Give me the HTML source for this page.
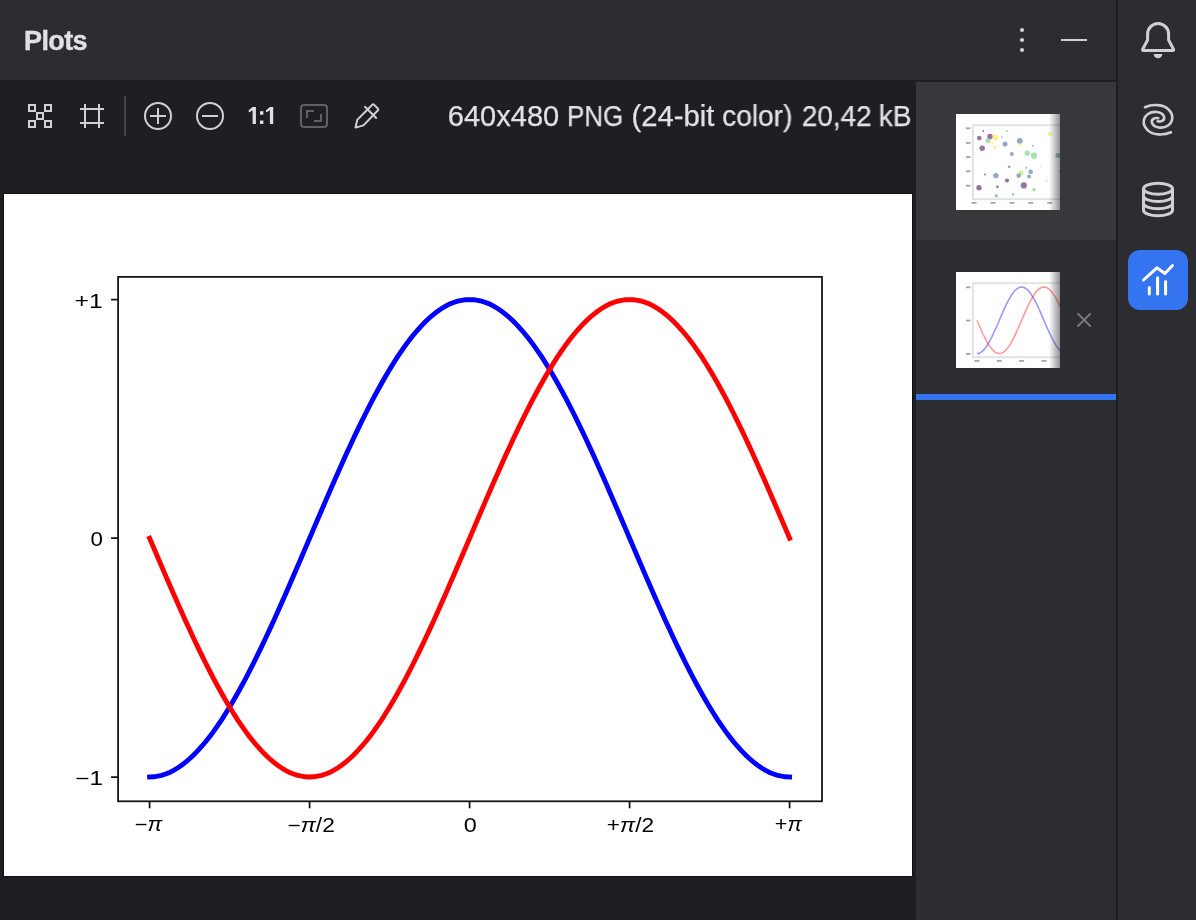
<!DOCTYPE html>
<html><head><meta charset="utf-8">
<style>
*{margin:0;padding:0;box-sizing:border-box}
html,body{width:1196px;height:920px;overflow:hidden;background:#1e1f22;font-family:"Liberation Sans",sans-serif}
.abs{position:absolute}
#header{left:0;top:0;width:1116px;height:80px;background:#2b2d30}
#title{left:24px;top:25px;font-size:27px;font-weight:bold;color:#dfe1e5;line-height:32px;letter-spacing:-0.6px;-webkit-text-stroke:0.4px #dfe1e5}
body div{will-change:transform}
#vsep{left:1116px;top:0;width:2px;height:920px;background:#1e1f22}
#rbar{left:1118px;top:0;width:78px;height:920px;background:#2b2d30}
#panel{left:916px;top:82px;width:200px;height:838px;background:#2b2d30}
#sel{left:916px;top:82px;width:200px;height:158px;background:#36383c}
#blueline{left:916px;top:394px;width:200px;height:6px;background:#3574f0}
.info{top:100px;font-size:28.8px;word-spacing:-2px;-webkit-text-stroke:0.25px #dfe1e5;color:#dfe1e5;line-height:32px;white-space:nowrap}
#plot{left:3px;top:193px;width:910px;height:684px;background:#111216}
#plotinner{left:1px;top:1px;width:908px;height:682px;background:#fff}
.thumb{width:104px;height:96px;background:#fff;overflow:hidden}
.fade{right:0;top:0;width:11.5px;height:96px;background:linear-gradient(to right,rgba(43,45,52,0),rgba(43,45,52,0.56))}
.tick{font-size:19.5px;color:#000;line-height:20px;white-space:nowrap}
</style></head><body>
<div id="header" class="abs"></div>
<div id="title" class="abs">Plots</div>
<div id="vsep" class="abs"></div>
<div id="rbar" class="abs"></div>
<div id="panel" class="abs"></div>
<div id="sel" class="abs"></div>
<div id="blueline" class="abs"></div>

<!-- header icons -->
<svg class="abs" style="left:1000px;top:20px" width="100" height="40" viewBox="0 0 100 40">
  <circle cx="22" cy="10" r="2.1" fill="#ced0d6"/>
  <circle cx="22" cy="20" r="2.1" fill="#ced0d6"/>
  <circle cx="22" cy="30" r="2.1" fill="#ced0d6"/>
  <rect x="61" y="19" width="26" height="2" fill="#ced0d6"/>
</svg>

<!-- toolbar icons -->
<svg class="abs" style="left:0;top:80px" width="400" height="114" viewBox="0 80 400 114">
  <g fill="none" stroke="#ced0d6" stroke-width="2">
    <rect x="29" y="105" width="6" height="6"/>
    <rect x="45" y="105" width="6" height="6"/>
    <rect x="37" y="113" width="6" height="6"/>
    <rect x="29" y="121" width="6" height="6"/>
    <rect x="45" y="121" width="6" height="6"/>
    <path d="M85 104V128M99 104V128M80 109H104M80 123H104"/>
    <circle cx="158" cy="116" r="13"/>
    <path d="M150 116H166M158 108V124"/>
    <circle cx="210" cy="116" r="13"/>
    <path d="M202 116H218"/>
  </g>
  <rect x="124" y="96" width="2" height="40" fill="#43454a"/>
  <g fill="none" stroke="#606060" stroke-width="2">
    <rect x="301" y="105" width="26" height="22" rx="3"/>
    <path d="M307 118V111H314M314 121H321V114"/>
  </g>
  <g fill="none" stroke="#ced0d6" stroke-width="2" stroke-linejoin="round" stroke-linecap="round">
    <path d="M367.6 109.5 L372.2 104.9 Q373.2 103.9 374.2 104.9 L377.8 108.5 Q378.8 109.5 377.8 110.5 L373.4 115 L363.5 125.4 L355.5 127.6 L357.4 119.6 Z"/>
    <path d="M365 106.8 L376.2 118"/>
  </g>
</svg>
<svg class="abs" style="left:240px;top:100px" width="40" height="30" viewBox="240 100 40 30">
  <g fill="#dfe1e5">
    <path d="M248.7 110.2 L252.6 107 H255.9 V124 H252.6 V110.2 L249.4 112.3 Q248.7 112.6 248.7 111.6 Z"/>
    <rect x="260" y="111.2" width="3.4" height="3.5"/>
    <rect x="260" y="120.5" width="3.4" height="3.4"/>
    <path d="M266 110.2 L269.9 107 H273.2 V124 H269.9 V110.2 L266.7 112.3 Q266 112.6 266 111.6 Z"/>
  </g>
</svg>
<div class="abs info" style="left:448.80px;transform-origin:1.20px 50%;transform:translateX(-1.20px) scaleX(1.008)">640x480</div><div class="abs info" style="left:568.80px;transform-origin:2.20px 50%;transform:translateX(-2.20px) scaleX(0.900)">PNG</div><div class="abs info" style="left:632.50px;transform-origin:1.50px 50%;transform:translateX(-1.50px) scaleX(1.016)">(24-bit</div><div class="abs info" style="left:723.10px;transform-origin:0.90px 50%;transform:translateX(-0.90px) scaleX(0.976)">color)</div><div class="abs info" style="left:802.80px;transform-origin:1.20px 50%;transform:translateX(-1.20px) scaleX(0.969)">20,42</div><div class="abs info" style="left:880.70px;transform-origin:2.30px 50%;transform:translateX(-2.30px) scaleX(0.970)">kB</div>

<!-- main plot -->
<div id="plot" class="abs"><div id="plotinner" class="abs">
<svg class="abs" style="left:0;top:0" width="908" height="682" viewBox="0 0 908 682">
  <path d="M145.6 583.0 L149.6 582.8 L153.6 582.2 L157.6 581.3 L161.6 580.0 L165.6 578.4 L169.6 576.4 L173.6 574.0 L177.6 571.3 L181.6 568.2 L185.6 564.8 L189.6 561.0 L193.6 556.9 L197.6 552.5 L201.6 547.8 L205.6 542.7 L209.6 537.4 L213.6 531.7 L217.6 525.8 L221.6 519.5 L225.6 513.0 L229.6 506.3 L233.6 499.3 L237.6 492.0 L241.6 484.6 L245.6 476.9 L249.6 469.0 L253.6 460.9 L257.6 452.6 L261.6 444.2 L265.6 435.6 L269.6 426.9 L273.6 418.0 L277.6 409.0 L281.6 400.0 L285.6 390.8 L289.6 381.6 L293.6 372.3 L297.6 363.0 L301.6 353.6 L305.6 344.2 L309.6 334.9 L313.6 325.5 L317.6 316.2 L321.6 306.9 L325.6 297.7 L329.6 288.5 L333.6 279.5 L337.6 270.5 L341.6 261.6 L345.6 252.9 L349.6 244.3 L353.6 235.9 L357.6 227.6 L361.6 219.5 L365.6 211.6 L369.6 203.9 L373.6 196.5 L377.6 189.2 L381.6 182.2 L385.6 175.5 L389.6 169.0 L393.6 162.7 L397.6 156.8 L401.6 151.1 L405.6 145.8 L409.6 140.7 L413.6 136.0 L417.6 131.6 L421.6 127.5 L425.6 123.7 L429.6 120.3 L433.6 117.2 L437.6 114.5 L441.6 112.1 L445.6 110.1 L449.6 108.5 L453.6 107.2 L457.6 106.3 L461.6 105.7 L465.6 105.6 L469.6 105.7 L473.6 106.3 L477.6 107.2 L481.6 108.5 L485.6 110.1 L489.6 112.1 L493.6 114.5 L497.6 117.2 L501.6 120.3 L505.6 123.7 L509.6 127.5 L513.6 131.6 L517.6 136.0 L521.6 140.7 L525.6 145.8 L529.6 151.1 L533.6 156.8 L537.6 162.7 L541.6 169.0 L545.6 175.5 L549.6 182.2 L553.6 189.2 L557.6 196.5 L561.6 203.9 L565.6 211.6 L569.6 219.5 L573.6 227.6 L577.6 235.9 L581.6 244.3 L585.6 252.9 L589.6 261.6 L593.6 270.5 L597.6 279.5 L601.6 288.5 L605.6 297.7 L609.6 306.9 L613.6 316.2 L617.6 325.5 L621.6 334.9 L625.6 344.2 L629.6 353.6 L633.6 363.0 L637.6 372.3 L641.6 381.6 L645.6 390.8 L649.6 400.0 L653.6 409.0 L657.6 418.0 L661.6 426.9 L665.6 435.6 L669.6 444.2 L673.6 452.6 L677.6 460.9 L681.6 469.0 L685.6 476.9 L689.6 484.6 L693.6 492.0 L697.6 499.3 L701.6 506.3 L705.6 513.0 L709.6 519.5 L713.6 525.8 L717.6 531.7 L721.6 537.4 L725.6 542.7 L729.6 547.8 L733.6 552.5 L737.6 556.9 L741.6 561.0 L745.6 564.8 L749.6 568.2 L753.6 571.3 L757.6 574.0 L761.6 576.4 L765.6 578.4 L769.6 580.0 L773.6 581.3 L777.6 582.2 L781.6 582.8 L785.6 583.0" fill="none" stroke="#0000ff" stroke-width="4.9" stroke-linecap="square"/>
  <path d="M145.6 344.2 L149.6 353.6 L153.6 363.0 L157.6 372.3 L161.6 381.6 L165.6 390.8 L169.6 400.0 L173.6 409.0 L177.6 418.0 L181.6 426.9 L185.6 435.6 L189.6 444.2 L193.6 452.6 L197.6 460.9 L201.6 469.0 L205.6 476.9 L209.6 484.6 L213.6 492.0 L217.6 499.3 L221.6 506.3 L225.6 513.0 L229.6 519.5 L233.6 525.8 L237.6 531.7 L241.6 537.4 L245.6 542.7 L249.6 547.8 L253.6 552.5 L257.6 556.9 L261.6 561.0 L265.6 564.8 L269.6 568.2 L273.6 571.3 L277.6 574.0 L281.6 576.4 L285.6 578.4 L289.6 580.0 L293.6 581.3 L297.6 582.2 L301.6 582.8 L305.6 583.0 L309.6 582.8 L313.6 582.2 L317.6 581.3 L321.6 580.0 L325.6 578.4 L329.6 576.4 L333.6 574.0 L337.6 571.3 L341.6 568.2 L345.6 564.8 L349.6 561.0 L353.6 556.9 L357.6 552.5 L361.6 547.8 L365.6 542.7 L369.6 537.4 L373.6 531.7 L377.6 525.8 L381.6 519.5 L385.6 513.0 L389.6 506.3 L393.6 499.3 L397.6 492.0 L401.6 484.6 L405.6 476.9 L409.6 469.0 L413.6 460.9 L417.6 452.6 L421.6 444.2 L425.6 435.6 L429.6 426.9 L433.6 418.0 L437.6 409.0 L441.6 400.0 L445.6 390.8 L449.6 381.6 L453.6 372.3 L457.6 363.0 L461.6 353.6 L465.6 344.2 L469.6 334.9 L473.6 325.5 L477.6 316.2 L481.6 306.9 L485.6 297.7 L489.6 288.5 L493.6 279.5 L497.6 270.5 L501.6 261.6 L505.6 252.9 L509.6 244.3 L513.6 235.9 L517.6 227.6 L521.6 219.5 L525.6 211.6 L529.6 203.9 L533.6 196.5 L537.6 189.2 L541.6 182.2 L545.6 175.5 L549.6 169.0 L553.6 162.7 L557.6 156.8 L561.6 151.1 L565.6 145.8 L569.6 140.7 L573.6 136.0 L577.6 131.6 L581.6 127.5 L585.6 123.7 L589.6 120.3 L593.6 117.2 L597.6 114.5 L601.6 112.1 L605.6 110.1 L609.6 108.5 L613.6 107.2 L617.6 106.3 L621.6 105.7 L625.6 105.6 L629.6 105.7 L633.6 106.3 L637.6 107.2 L641.6 108.5 L645.6 110.1 L649.6 112.1 L653.6 114.5 L657.6 117.2 L661.6 120.3 L665.6 123.7 L669.6 127.5 L673.6 131.6 L677.6 136.0 L681.6 140.7 L685.6 145.8 L689.6 151.1 L693.6 156.8 L697.6 162.7 L701.6 169.0 L705.6 175.5 L709.6 182.2 L713.6 189.2 L717.6 196.5 L721.6 203.9 L725.6 211.6 L729.6 219.5 L733.6 227.6 L737.6 235.9 L741.6 244.3 L745.6 252.9 L749.6 261.6 L753.6 270.5 L757.6 279.5 L761.6 288.5 L765.6 297.7 L769.6 306.9 L773.6 316.2 L777.6 325.5 L781.6 334.9 L785.6 344.2" fill="none" stroke="#ff0000" stroke-width="4.9" stroke-linecap="square"/>
  <rect x="114.1" y="82.9" width="703.9" height="524.4" fill="none" stroke="#111" stroke-width="1.75"/>
  <g stroke="#111" stroke-width="1.75">
    <path d="M107.1 105.6H114.1M107.1 344.2H114.1M107.1 583.0H114.1"/>
    <path d="M145.6 607.3V614.3M305.6 607.3V614.3M465.6 607.3V614.3M625.6 607.3V614.3M785.6 607.3V614.3"/>
  </g>
</svg>
</div></div>
<div class="abs tick" style="left:0.00px;top:290.55px;width:103px;text-align:right;transform-origin:82.00px 50%;transform:translateX(-5.90px) scaleX(1.270)">+1</div>
<div class="abs tick" style="left:0.00px;top:529.25px;width:103px;text-align:right;transform-origin:93.00px 50%;transform:translateX(-1.40px) scaleX(1.144)">0</div>
<div class="abs tick" style="left:0.00px;top:767.95px;width:103px;text-align:right;transform-origin:82.00px 50%;transform:translateX(-5.20px) scaleX(1.250)">&#8722;1</div>
<div class="abs tick" style="left:49.60px;top:813.50px;width:200px;text-align:center;transform-origin:89.40px 50%;transform:translateX(-2.90px) scaleX(1.126)">&#8722;<i>&#960;</i></div>
<div class="abs tick" style="left:209.60px;top:815.00px;width:200px;text-align:center;transform-origin:81.40px 50%;transform:translateX(-1.90px) scaleX(1.161)">&#8722;<i>&#960;</i>/2</div>
<div class="abs tick" style="left:369.60px;top:815.00px;width:200px;text-align:center;transform-origin:95.40px 50%;transform:translateX(-0.70px) scaleX(1.200)">0</div>
<div class="abs tick" style="left:529.60px;top:815.00px;width:200px;text-align:center;transform-origin:81.40px 50%;transform:translateX(-2.50px) scaleX(1.161)">+<i>&#960;</i>/2</div>
<div class="abs tick" style="left:689.60px;top:813.50px;width:200px;text-align:center;transform-origin:89.40px 50%;transform:translateX(-2.80px) scaleX(1.109)">+<i>&#960;</i></div>

<div class="abs thumb" style="left:956px;top:114px">
<svg width="104" height="96" viewBox="0 0 104 96">
  <rect x="17" y="11.2" width="99" height="74" fill="none" stroke="#e2e2e2" stroke-width="1.9"/>
  <rect x="10" y="13.4" width="4.5" height="1.8" fill="#8a8a8a" fill-opacity="0.75"/><rect x="10" y="28.1" width="4.5" height="1.8" fill="#8a8a8a" fill-opacity="0.75"/><rect x="10" y="42.2" width="4.5" height="1.8" fill="#8a8a8a" fill-opacity="0.75"/><rect x="10" y="56.3" width="4.5" height="1.8" fill="#8a8a8a" fill-opacity="0.75"/><rect x="10" y="70.8" width="4.5" height="1.8" fill="#8a8a8a" fill-opacity="0.75"/><rect x="15.5" y="88" width="5" height="1.8" fill="#8a8a8a" fill-opacity="0.75"/><rect x="34.5" y="88" width="5" height="1.8" fill="#8a8a8a" fill-opacity="0.75"/><rect x="53.5" y="88" width="5" height="1.8" fill="#8a8a8a" fill-opacity="0.75"/><rect x="72.2" y="88" width="5" height="1.8" fill="#8a8a8a" fill-opacity="0.75"/><rect x="91.4" y="88" width="5" height="1.8" fill="#8a8a8a" fill-opacity="0.75"/>
  <circle cx="23.3" cy="24.1" r="2.3" fill="#440154" fill-opacity="0.55"/><circle cx="34" cy="22.5" r="2.7" fill="#440154" fill-opacity="0.55"/><circle cx="39.3" cy="23.5" r="2.9" fill="#fde725" fill-opacity="0.55"/><circle cx="32" cy="26.8" r="2.5" fill="#5ec962" fill-opacity="0.55"/><circle cx="27.2" cy="17" r="1" fill="#440154" fill-opacity="0.55"/><circle cx="51" cy="17" r="1" fill="#5ec962" fill-opacity="0.55"/><circle cx="26.2" cy="34.2" r="2.7" fill="#440154" fill-opacity="0.55"/><circle cx="38.9" cy="33.3" r="1.6" fill="#fde725" fill-opacity="0.55"/><circle cx="49" cy="30" r="2.5" fill="#31688e" fill-opacity="0.55"/><circle cx="63.8" cy="26.8" r="2.9" fill="#31688e" fill-opacity="0.55"/><circle cx="55.9" cy="40" r="2" fill="#31688e" fill-opacity="0.55"/><circle cx="71.2" cy="39.1" r="2.7" fill="#5ec962" fill-opacity="0.55"/><circle cx="78" cy="41.7" r="3.1" fill="#5ec962" fill-opacity="0.55"/><circle cx="77" cy="31.9" r="1" fill="#21918c" fill-opacity="0.55"/><circle cx="93.7" cy="20" r="2.1" fill="#fde725" fill-opacity="0.55"/><circle cx="102" cy="41.5" r="2.5" fill="#21918c" fill-opacity="0.55"/><circle cx="53.2" cy="52.8" r="1.4" fill="#31688e" fill-opacity="0.55"/><circle cx="65.3" cy="58.7" r="2.3" fill="#b5de2b" fill-opacity="0.55"/><circle cx="70.2" cy="53.8" r="1.2" fill="#5ec962" fill-opacity="0.55"/><circle cx="74.7" cy="57.7" r="2.3" fill="#31688e" fill-opacity="0.55"/><circle cx="73.1" cy="62.6" r="2" fill="#31688e" fill-opacity="0.55"/><circle cx="62.7" cy="61.6" r="2.3" fill="#31688e" fill-opacity="0.55"/><circle cx="39.9" cy="61.6" r="2.7" fill="#31688e" fill-opacity="0.55"/><circle cx="51" cy="66.5" r="2.1" fill="#440154" fill-opacity="0.55"/><circle cx="67.8" cy="71.4" r="3.1" fill="#440154" fill-opacity="0.55"/><circle cx="23" cy="73.7" r="2.7" fill="#440154" fill-opacity="0.55"/><circle cx="41.4" cy="72.8" r="1.4" fill="#440154" fill-opacity="0.55"/><circle cx="28.9" cy="60.6" r="1" fill="#440154" fill-opacity="0.55"/><circle cx="78" cy="75.7" r="1.8" fill="#5ec962" fill-opacity="0.55"/><circle cx="40.3" cy="81.8" r="1.6" fill="#21918c" fill-opacity="0.55"/><circle cx="57" cy="80.4" r="1.2" fill="#21918c" fill-opacity="0.55"/><circle cx="90.7" cy="66.9" r="0.7" fill="#21918c" fill-opacity="0.55"/><circle cx="103" cy="57.3" r="0.8" fill="#21918c" fill-opacity="0.55"/><circle cx="45.8" cy="22.9" r="1" fill="#8f8fd0" fill-opacity="0.55"/><circle cx="84.9" cy="52.8" r="0.8" fill="#bbbbbb" fill-opacity="0.55"/><circle cx="81" cy="81" r="0.6" fill="#cccccc" fill-opacity="0.55"/><circle cx="64" cy="30" r="1.5" fill="#fde725" fill-opacity="0.55"/><circle cx="24.3" cy="38.1" r="1" fill="#fde725" fill-opacity="0.55"/><circle cx="36" cy="29" r="1.2" fill="#fde725" fill-opacity="0.55"/>
</svg><div class="abs fade"></div></div>
<div class="abs thumb" style="left:956px;top:272px">
<svg width="104" height="96" viewBox="0 0 104 96">
  <rect x="17" y="11.2" width="99" height="74" fill="none" stroke="#e2e2e2" stroke-width="1.9"/>
  <rect x="10" y="14.4" width="4.5" height="1.8" fill="#8a8a8a" fill-opacity="0.75"/><rect x="10" y="47.7" width="4.5" height="1.8" fill="#8a8a8a" fill-opacity="0.75"/><rect x="10" y="81.0" width="4.5" height="1.8" fill="#8a8a8a" fill-opacity="0.75"/><rect x="18.5" y="88" width="5" height="1.8" fill="#8a8a8a" fill-opacity="0.75"/><rect x="40.8" y="88" width="5" height="1.8" fill="#8a8a8a" fill-opacity="0.75"/><rect x="63.1" y="88" width="5" height="1.8" fill="#8a8a8a" fill-opacity="0.75"/><rect x="85.4" y="88" width="5" height="1.8" fill="#8a8a8a" fill-opacity="0.75"/>
  <path d="M21.0 81.6 L22.5 81.4 L24.0 80.8 L25.5 79.9 L27.0 78.6 L28.6 76.9 L30.1 75.0 L31.6 72.7 L33.1 70.2 L34.6 67.4 L36.1 64.4 L37.6 61.2 L39.1 57.9 L40.7 54.5 L42.2 51.0 L43.7 47.4 L45.2 43.9 L46.7 40.4 L48.2 37.0 L49.7 33.8 L51.2 30.7 L52.7 27.8 L54.3 25.1 L55.8 22.7 L57.3 20.6 L58.8 18.8 L60.3 17.3 L61.8 16.2 L63.3 15.5 L64.8 15.1 L66.4 15.1 L67.9 15.5 L69.4 16.2 L70.9 17.3 L72.4 18.8 L73.9 20.6 L75.4 22.7 L76.9 25.1 L78.5 27.8 L80.0 30.7 L81.5 33.8 L83.0 37.0 L84.5 40.4 L86.0 43.9 L87.5 47.4 L89.0 51.0 L90.5 54.5 L92.1 57.9 L93.6 61.2 L95.1 64.4 L96.6 67.4 L98.1 70.2 L99.6 72.7 L101.1 75.0 L102.6 76.9 L104.2 78.6 L105.7 79.9 L107.2 80.8 L108.7 81.4 L110.2 81.6" fill="none" stroke="#0000ff" stroke-opacity="0.4" stroke-width="1.6"/>
  <path d="M21.0 48.3 L22.5 51.8 L24.0 55.3 L25.5 58.7 L27.0 62.0 L28.6 65.2 L30.1 68.1 L31.6 70.9 L33.1 73.3 L34.6 75.5 L36.1 77.4 L37.6 78.9 L39.1 80.1 L40.7 81.0 L42.2 81.4 L43.7 81.5 L45.2 81.3 L46.7 80.6 L48.2 79.6 L49.7 78.2 L51.2 76.5 L52.7 74.5 L54.3 72.1 L55.8 69.5 L57.3 66.7 L58.8 63.6 L60.3 60.4 L61.8 57.0 L63.3 53.6 L64.8 50.1 L66.4 46.5 L67.9 43.0 L69.4 39.6 L70.9 36.2 L72.4 33.0 L73.9 29.9 L75.4 27.1 L76.9 24.5 L78.5 22.1 L80.0 20.1 L81.5 18.4 L83.0 17.0 L84.5 16.0 L86.0 15.3 L87.5 15.1 L89.0 15.2 L90.5 15.6 L92.1 16.5 L93.6 17.7 L95.1 19.2 L96.6 21.1 L98.1 23.3 L99.6 25.7 L101.1 28.5 L102.6 31.4 L104.2 34.6 L105.7 37.9 L107.2 41.3 L108.7 44.8 L110.2 48.3" fill="none" stroke="#ff0000" stroke-opacity="0.4" stroke-width="1.6"/>
</svg><div class="abs fade"></div></div>
<svg class="abs" style="left:1074px;top:310px" width="20" height="20" viewBox="1074 310 20 20">
  <path d="M1078.1 313.9L1090.2 326M1090.2 313.9L1078.1 326" stroke="#767a81" stroke-width="2" stroke-linecap="round"/>
</svg>

<svg class="abs" style="left:1118px;top:0" width="78" height="320" viewBox="1118 0 78 320">
  <g fill="none" stroke="#ced0d6" stroke-width="3" stroke-linejoin="round" stroke-linecap="round">
    <path d="M1147.6 40 V34 A10.5 10.5 0 0 1 1168.6 34 V40 L1173.4 49 Q1174.2 50.6 1172.4 50.6 H1143.8 Q1142 50.6 1142.8 49 L1147.6 40 Z"/>
  </g>
  <path d="M1153.7 53.9 H1162.3 A4.3 4.3 0 0 1 1153.7 53.9 Z" fill="#ced0d6"/>
  <g transform="translate(1138 100)" fill="none" stroke="#ced0d6" stroke-width="2.6" stroke-linecap="round">
    <path d="M7 7.2 C14 4 26 4 31 10 C36 15 35 22 30 25.5 C25 29 16 28 14 23 C13 19.2 16.5 17.4 20.3 18.3"/>
    <path d="M33 32.3 C26 35.5 14 35.5 9 29.5 C4 24.5 5 17.5 10 14 C15 10.5 24 11.5 26 16.5 C27 20.3 23.5 22.1 19.7 21.2"/>
  </g>
  <g fill="none" stroke="#ced0d6" stroke-width="3">
    <ellipse cx="1158" cy="188.8" rx="14.5" ry="5.5"/>
    <path d="M1143.5 188.8 V210.3 A14.5 5.5 0 0 0 1172.5 210.3 V188.8"/>
    <path d="M1143.5 196 A14.5 5.5 0 0 0 1172.5 196"/>
    <path d="M1143.5 203.2 A14.5 5.5 0 0 0 1172.5 203.2"/>
  </g>
  <rect x="1128" y="250" width="60" height="60" rx="12" fill="#3574f0"/>
  <g fill="none" stroke="#ffffff" stroke-width="3" stroke-linecap="round" stroke-linejoin="round">
    <path d="M1143.5 280 L1156.9 267.8 L1164.9 273.5 L1172.5 265.5"/>
    <path d="M1149.3 287.6 V294.1 M1157.6 277.7 V294.1 M1165.6 281.5 V294.1"/>
  </g>
</svg>
</body></html>
